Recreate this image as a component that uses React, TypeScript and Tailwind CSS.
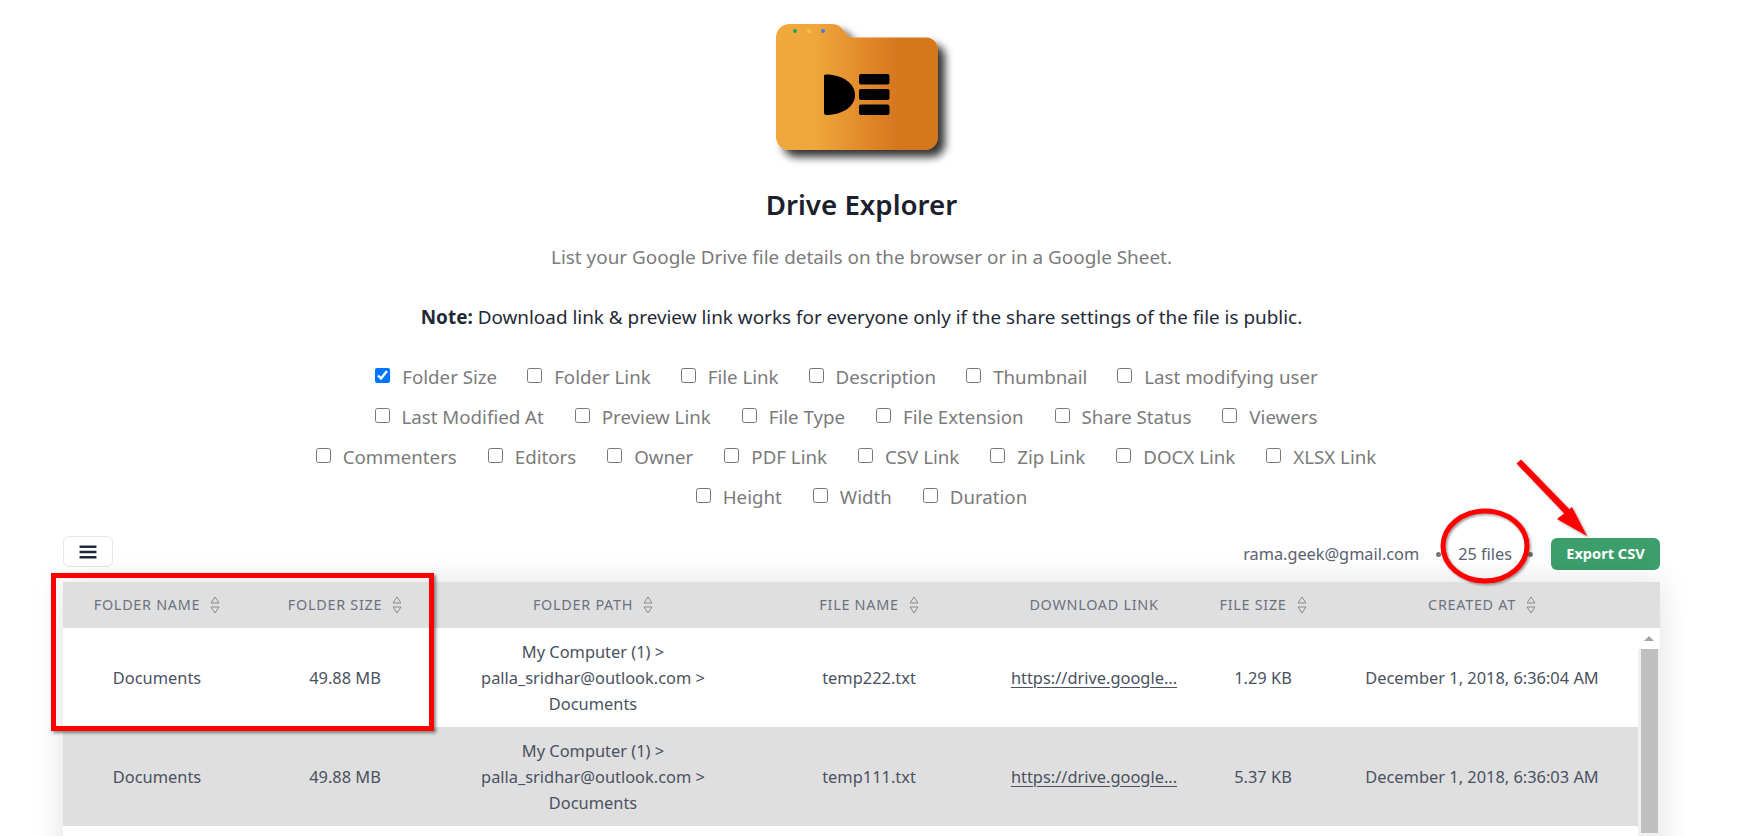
import React from "react";

const rows1 = [
  ["Folder Size", "Folder Link", "File Link", "Description", "Thumbnail", "Last modifying user"],
  ["Last Modified At", "Preview Link", "File Type", "File Extension", "Share Status", "Viewers"],
  ["Commenters", "Editors", "Owner", "PDF Link", "CSV Link", "Zip Link", "DOCX Link", "XLSX Link"],
  ["Height", "Width", "Duration"],
];

const headers: [string, boolean][] = [
  ["Folder Name", true],
  ["Folder Size", true],
  ["Folder Path", true],
  ["File Name", true],
  ["Download Link", false],
  ["File Size", true],
  ["Created At", true],
];

const data = [
  ["temp222.txt", "1.29 KB", "December 1, 2018, 6:36:04 AM"],
  ["temp111.txt", "5.37 KB", "December 1, 2018, 6:36:03 AM"],
];

function Sort() {
  return (
    <svg width="10" height="18" viewBox="0 0 10 18" className="ml-[10px] shrink-0" fill="none" stroke="#8a8a8a" strokeWidth="1">
      <path d="M5 1 L9 7 H1 Z" />
      <path d="M5 17 L9 11 H1 Z" />
    </svg>
  );
}

function Logo() {
  return (
    <svg width="192" height="180" viewBox="765 0 192 180" className="block -ml-[1px]">
      <defs>
        <linearGradient id="fg" x1="776" x2="938" y1="0" y2="0" gradientUnits="userSpaceOnUse">
          <stop offset="0.23" stopColor="#f0a83c" />
          <stop offset="0.75" stopColor="#d6761f" />
        </linearGradient>
        <filter id="fs" x="-20%" y="-20%" width="140%" height="140%">
          <feDropShadow dx="7" dy="7" stdDeviation="4.5" floodColor="#000" floodOpacity="0.8" />
        </filter>
      </defs>
      <path
        d="M790 24 H832 C838 24 841 27 844 31 C847 35 849 37.5 854 37.5 H926 C933 37.5 938 43 938 50 V137 C938 144 932 150 925 150 H789 C782 150 776 144 776 137 V38 C776 30 782 24 790 24 Z"
        fill="url(#fg)"
        filter="url(#fs)"
      />
      <circle cx="795" cy="31" r="2" fill="#1aa85a" />
      <circle cx="809" cy="31" r="2" fill="#f5c842" />
      <circle cx="823" cy="31" r="2" fill="#3b7ded" />
      <path d="M826 74.5 C843 74.5 855 84 855 95 C855 106 843 115 826 115 C825 115 824 114 824 113 V76 C824 75 825 74.5 826 74.5 Z" fill="#000" />
      <rect x="859" y="74" width="30.5" height="10.5" rx="2" fill="#000" />
      <rect x="859" y="89" width="30.5" height="11" rx="2" fill="#000" />
      <rect x="859" y="104.5" width="30.5" height="10.5" rx="2" fill="#000" />
    </svg>
  );
}

const gridCols = "grid grid-cols-[188px_188px_308px_244px_206px_132px_306px]";

export default function App() {
  return (
    <div className="relative w-[1764px] h-[836px] overflow-hidden bg-white font-['Noto_Sans',sans-serif] text-[#1f2937]">
      <div className="w-[1723px] pl-[63px] pr-[63px] flex flex-col">
        <div className="flex justify-center h-[180px]">
          <Logo />
        </div>
        <h1 className="mt-[6px] h-[36px] leading-[36px] text-center text-[27.7px] font-semibold text-[#1a202c]">Drive Explorer</h1>
        <p className="mt-[21px] h-[28px] leading-[28px] text-center text-[18.9px] text-[#7b7b7b]">
          List your Google Drive file details on the browser or in a Google Sheet.
        </p>
        <p className="mt-[32px] h-[28px] leading-[28px] text-center text-[18.9px] text-[#1f2937]">
          <span className="font-bold">Note:</span> Download link &amp; preview link works for everyone only if the share settings of the file is public.
        </p>
        <div className="mt-[26px] flex flex-col">
          {rows1.map((r, i) => (
            <div key={i} className="flex justify-center h-[40px] items-center">
              {r.map((l) => (
                <label key={l} className={`flex items-center text-[18.7px] text-[#7b7b7b] ${l === "Duration" ? "mr-0" : i === 0 ? "mr-[30px]" : "mr-[31px]"}`}>
                  <input type="checkbox" defaultChecked={l === "Folder Size" && i === 0} className="w-[15px] h-[15px] m-0 mr-[12px] -translate-y-[1px]" />
                  {l}
                </label>
              ))}
            </div>
          ))}
        </div>
        <div className="mt-[19px] h-[46px] flex items-start justify-between">
          <button className="w-[50px] h-[31px] rounded-[6px] border border-[#e2e8f0] bg-white flex items-center justify-center">
            <svg width="18" height="14" viewBox="0 0 18 14" fill="#1f2937">
              <rect x="0.5" y="0.5" width="17" height="2.4" rx="0.6" />
              <rect x="0.5" y="5.8" width="17" height="2.4" rx="0.6" />
              <rect x="0.5" y="11.1" width="17" height="2.4" rx="0.6" />
            </svg>
          </button>
          <div className="flex items-center h-[34px] mt-[1px]">
            <span className="text-[16.3px] text-[#5a6270]">rama.geek@gmail.com</span>
            <span className="ml-[17px] w-[5px] h-[5px] rounded-full bg-[#777]" />
            <span className="ml-[17px] text-[16.3px] text-[#5a6270]">25 files</span>
            <span className="ml-[16px] w-[5px] h-[5px] rounded-full bg-[#777]" />
            <button className="ml-[18px] w-[109px] h-[32px] rounded-[6px] bg-[#3c9f6b] text-white text-[14.6px] font-bold">Export CSV</button>
          </div>
        </div>
        <div className="relative w-[1597px] h-[300px] shadow-[0_0_30px_rgba(0,0,0,0.12)]">
          <div className={`${gridCols} h-[46px] bg-[#dfdfdf]`}>
            {headers.map(([h, s]) => (
              <div key={h} className="flex items-center justify-center uppercase text-[14.4px] tracking-[0.05em] text-[#6b7280]">
                {h}
                {s && <Sort />}
              </div>
            ))}
          </div>
          <div className="flex">
            <div className="w-[1575px] shrink-0">
              {data.map((d, i) => (
                <div key={i} className={`${gridCols} h-[99px] items-center text-center text-[16.4px] leading-[26px] text-[#4a5160] ${i % 2 ? "bg-[#dfdfdf]" : "bg-white"}`}>
                  <div>Documents</div>
                  <div>49.88 MB</div>
                  <div>
                    My Computer (1) &gt;
                    <br />
                    palla_sridhar@outlook.com &gt;
                    <br />
                    Documents
                  </div>
                  <div>{d[0]}</div>
                  <div>
                    <span className="underline underline-offset-[3px]">https://drive.google...</span>
                  </div>
                  <div>{d[1]}</div>
                  <div>{d[2]}</div>
                </div>
              ))}
              <div className="h-[99px] bg-white" />
            </div>
            <div className="w-[22px] shrink-0 bg-[#f1f1f1] flex flex-col items-center">
              <div className="h-[21px] w-full bg-white flex items-center justify-center">
                <div className="w-0 h-0 border-x-[5px] border-x-transparent border-b-[5px] border-b-[#a3a3a3]" />
              </div>
              <div className="w-[17px] h-[184px] bg-[#bfbfbf]" />
            </div>
          </div>
        </div>
      </div>

      {/* hand-drawn annotations over the page */}
      <div className="absolute left-[51px] top-[573px] w-[383px] h-[158px] border-[5px] border-[#ff0000] shadow-[2px_2px_3px_rgba(0,0,0,0.45)]" />
      <svg className="absolute left-0 top-0 pointer-events-none" width="1764" height="836">
        <defs>
          <filter id="as" x="-20%" y="-20%" width="140%" height="140%">
            <feDropShadow dx="1.5" dy="1.5" stdDeviation="1" floodColor="#000" floodOpacity="0.4" />
          </filter>
        </defs>
        <ellipse cx="1485" cy="546" rx="42" ry="35" fill="none" stroke="#ff0000" strokeWidth="5" filter="url(#as)" />
        <g filter="url(#as)" fill="#ff0000">
          <path d="M1516.5 463.5 L1521 459.5 L1576 516 L1571 520.5 Z" />
          <path d="M1587 536 L1557 519 L1572 507 Z" />
        </g>
      </svg>
    </div>
  );
}
